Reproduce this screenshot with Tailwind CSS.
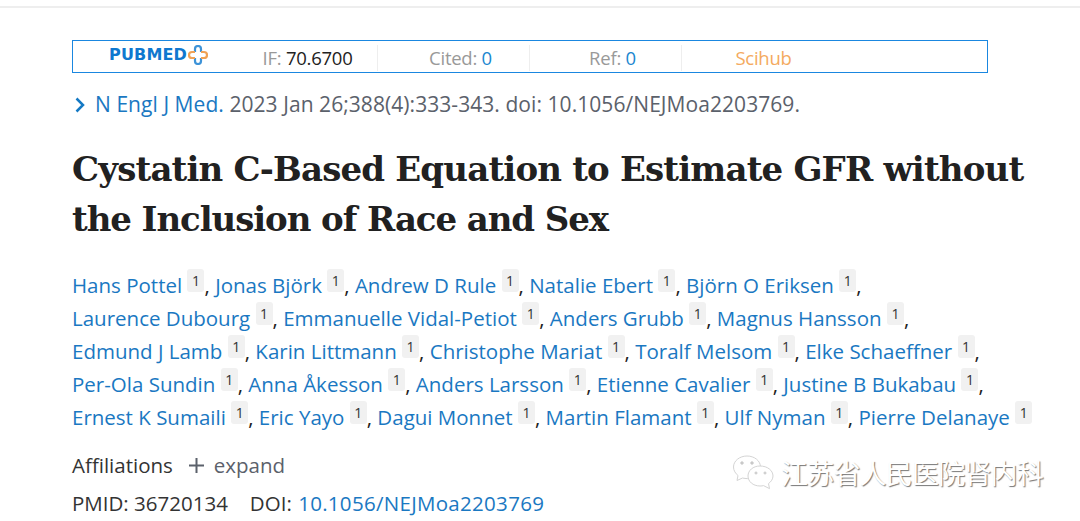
<!DOCTYPE html>
<html lang="en">
<head>
    <meta charset="UTF-8">
    <meta name="viewport" content="width=device-width, initial-scale=1.0">
    <title>Cystatin C-Based Equation to Estimate GFR</title>
    <script src="https://cdn.jsdelivr.net/npm/@tailwindcss/browser@4"></script>
</head>
<body class="bg-white h-[521px] overflow-hidden relative font-['Open_Sans','Noto_Sans',sans-serif]">
    <div class="h-[6px]"></div>
    <div class="h-[2px] bg-[#eeeeee]"></div>

    <div class="ml-[72px] mt-[32px] w-[916px]">
        <!-- toolbar -->
        <div class="h-[33px] border border-[#1a87e0] flex items-center text-[18.500px] tracking-[-0.25px] text-[#999999]">
            <div class="w-[135px] flex items-center justify-end -mt-[3px]">
                <span class="font-['DejaVu_Sans',sans-serif] font-bold text-[16px] tracking-[0.15px] text-[#0f78cf] leading-none">PUBMED</span>
                <svg class="w-[20px] h-[20px] ml-[1px]" viewBox="0 0 20 20" fill="none" stroke-width="2.200">
                    <path d="M7 7V4a3 3 0 0 1 6 0v3M13 13v3a3 3 0 0 1-6 0v-3" stroke="#3d93d8"/>
                    <path d="M7 7H4a3 3 0 0 0 0 6h3M13 7h3a3 3 0 0 1 0 6h-3" stroke="#f0a255"/>
                </svg>
            </div>
            <div class="w-[170px] h-[26px] flex items-center justify-center pl-[30px] border-r border-[#eeeeee] mt-[2px]">IF:&nbsp;<span class="text-[#222222]">70.6700</span></div>
            <div class="w-[152px] h-[26px] flex items-center justify-center pl-[14px] border-r border-[#eeeeee] mt-[2px]">Cited:&nbsp;<span class="text-[#1a87d0]">0</span></div>
            <div class="w-[152px] h-[26px] flex items-center justify-center pl-[14px] border-r border-[#eeeeee] mt-[2px]">Ref:&nbsp;<span class="text-[#1a87d0]">0</span></div>
            <div class="w-[163px] h-[26px] flex items-center justify-center text-[#f4aa60] mt-[2px]">Scihub</div>
        </div>

        <!-- citation -->
        <div class="mt-[17px] flex items-center h-[30px] text-[21px] tracking-[0.06px] text-[#5b616b]">
            <svg class="w-[10px] h-[16px] mr-[10px] ml-[3px]" viewBox="0 0 10 16" fill="none" stroke="#1479c4" stroke-width="2.500"><path d="M1.500 1.500 8 8l-6.500 6.500"/></svg>
            <span class="text-[#1a78c2]">N Engl J Med.</span>&nbsp;2023 Jan 26;388(4):333-343. doi: 10.1056/NEJMoa2203769.
        </div>

        <!-- title -->
        <h1 class="mt-[24px] w-[980px] font-['DejaVu_Serif',serif] font-bold text-[34px] leading-[50px] text-[#212121]"><span class="tracking-[-0.82px]">Cystatin C-Based Equation to Estimate GFR without</span><br><span class="tracking-[-1.08px]">the Inclusion of Race and Sex</span></h1>

        <!-- authors -->
        <div class="mt-[25px] w-[980px] text-[20.500px] leading-[33px] text-[#222222] whitespace-nowrap">
            <div><a class="text-[#1a78c2]">Hans Pottel</a> <sup class="bg-[#f1f1f1] rounded-[3px] text-[#333333] text-[14px] px-[4.500px] py-[2px] top-[-7px] leading-none">1</sup>, <a class="text-[#1a78c2]">Jonas Björk</a> <sup class="bg-[#f1f1f1] rounded-[3px] text-[#333333] text-[14px] px-[4.500px] py-[2px] top-[-7px] leading-none">1</sup>, <a class="text-[#1a78c2]">Andrew D Rule</a> <sup class="bg-[#f1f1f1] rounded-[3px] text-[#333333] text-[14px] px-[4.500px] py-[2px] top-[-7px] leading-none">1</sup>, <a class="text-[#1a78c2]">Natalie Ebert</a> <sup class="bg-[#f1f1f1] rounded-[3px] text-[#333333] text-[14px] px-[4.500px] py-[2px] top-[-7px] leading-none">1</sup>, <a class="text-[#1a78c2]">Björn O Eriksen</a> <sup class="bg-[#f1f1f1] rounded-[3px] text-[#333333] text-[14px] px-[4.500px] py-[2px] top-[-7px] leading-none">1</sup>,</div>
            <div><a class="text-[#1a78c2]">Laurence Dubourg</a> <sup class="bg-[#f1f1f1] rounded-[3px] text-[#333333] text-[14px] px-[4.500px] py-[2px] top-[-7px] leading-none">1</sup>, <a class="text-[#1a78c2]">Emmanuelle Vidal-Petiot</a> <sup class="bg-[#f1f1f1] rounded-[3px] text-[#333333] text-[14px] px-[4.500px] py-[2px] top-[-7px] leading-none">1</sup>, <a class="text-[#1a78c2]">Anders Grubb</a> <sup class="bg-[#f1f1f1] rounded-[3px] text-[#333333] text-[14px] px-[4.500px] py-[2px] top-[-7px] leading-none">1</sup>, <a class="text-[#1a78c2]">Magnus Hansson</a> <sup class="bg-[#f1f1f1] rounded-[3px] text-[#333333] text-[14px] px-[4.500px] py-[2px] top-[-7px] leading-none">1</sup>,</div>
            <div><a class="text-[#1a78c2]">Edmund J Lamb</a> <sup class="bg-[#f1f1f1] rounded-[3px] text-[#333333] text-[14px] px-[4.500px] py-[2px] top-[-7px] leading-none">1</sup>, <a class="text-[#1a78c2]">Karin Littmann</a> <sup class="bg-[#f1f1f1] rounded-[3px] text-[#333333] text-[14px] px-[4.500px] py-[2px] top-[-7px] leading-none">1</sup>, <a class="text-[#1a78c2]">Christophe Mariat</a> <sup class="bg-[#f1f1f1] rounded-[3px] text-[#333333] text-[14px] px-[4.500px] py-[2px] top-[-7px] leading-none">1</sup>, <a class="text-[#1a78c2]">Toralf Melsom</a> <sup class="bg-[#f1f1f1] rounded-[3px] text-[#333333] text-[14px] px-[4.500px] py-[2px] top-[-7px] leading-none">1</sup>, <a class="text-[#1a78c2]">Elke Schaeffner</a> <sup class="bg-[#f1f1f1] rounded-[3px] text-[#333333] text-[14px] px-[4.500px] py-[2px] top-[-7px] leading-none">1</sup>,</div>
            <div><a class="text-[#1a78c2]">Per-Ola Sundin</a> <sup class="bg-[#f1f1f1] rounded-[3px] text-[#333333] text-[14px] px-[4.500px] py-[2px] top-[-7px] leading-none">1</sup>, <a class="text-[#1a78c2]">Anna Åkesson</a> <sup class="bg-[#f1f1f1] rounded-[3px] text-[#333333] text-[14px] px-[4.500px] py-[2px] top-[-7px] leading-none">1</sup>, <a class="text-[#1a78c2]">Anders Larsson</a> <sup class="bg-[#f1f1f1] rounded-[3px] text-[#333333] text-[14px] px-[4.500px] py-[2px] top-[-7px] leading-none">1</sup>, <a class="text-[#1a78c2]">Etienne Cavalier</a> <sup class="bg-[#f1f1f1] rounded-[3px] text-[#333333] text-[14px] px-[4.500px] py-[2px] top-[-7px] leading-none">1</sup>, <a class="text-[#1a78c2]">Justine B Bukabau</a> <sup class="bg-[#f1f1f1] rounded-[3px] text-[#333333] text-[14px] px-[4.500px] py-[2px] top-[-7px] leading-none">1</sup>,</div>
            <div><a class="text-[#1a78c2]">Ernest K Sumaili</a> <sup class="bg-[#f1f1f1] rounded-[3px] text-[#333333] text-[14px] px-[4.500px] py-[2px] top-[-7px] leading-none">1</sup>, <a class="text-[#1a78c2]">Eric Yayo</a> <sup class="bg-[#f1f1f1] rounded-[3px] text-[#333333] text-[14px] px-[4.500px] py-[2px] top-[-7px] leading-none">1</sup>, <a class="text-[#1a78c2]">Dagui Monnet</a> <sup class="bg-[#f1f1f1] rounded-[3px] text-[#333333] text-[14px] px-[4.500px] py-[2px] top-[-7px] leading-none">1</sup>, <a class="text-[#1a78c2]">Martin Flamant</a> <sup class="bg-[#f1f1f1] rounded-[3px] text-[#333333] text-[14px] px-[4.500px] py-[2px] top-[-7px] leading-none">1</sup>, <a class="text-[#1a78c2]">Ulf Nyman</a> <sup class="bg-[#f1f1f1] rounded-[3px] text-[#333333] text-[14px] px-[4.500px] py-[2px] top-[-7px] leading-none">1</sup>, <a class="text-[#1a78c2]">Pierre Delanaye</a> <sup class="bg-[#f1f1f1] rounded-[3px] text-[#333333] text-[14px] px-[4.500px] py-[2px] top-[-7px] leading-none">1</sup></div>
        </div>

        <!-- affiliations -->
        <div class="mt-[15px] flex items-center h-[33px] text-[20.500px] text-[#333333]">
            Affiliations
            <svg class="w-[15px] h-[15px] ml-[16px] mr-[10px]" viewBox="0 0 15 15" stroke="#5b616b" stroke-width="2"><path d="M7.500 0v15M0 7.500h15"/></svg>
            <span class="text-[#5b616b]">expand</span>
        </div>
        <div class="mt-[3px] flex items-center h-[37px] text-[20.500px] text-[#333333]">
            PMID: 36720134<span class="ml-[22px]">DOI:</span>&nbsp;<span class="ml-[1px] tracking-[0.3px] text-[#1a78c2]">10.1056/NEJMoa2203769</span>
        </div>
    </div>

    <!-- watermark -->
    <div class="absolute left-[732px] top-[452px] flex items-center gap-[5px]">
        <svg class="w-[44px] h-[40px]" viewBox="0 0 44 40" fill="#ffffff" stroke="#d4d4d4" stroke-width="1">
            <path d="M15 4C7.500 4 1.500 9 1.500 15c0 3.500 2 6.500 4.500 8.500l-1 5 5.500-2.500c1.500.4 3.500.6 5 .6 7.500 0 13-5.500 13-11.600S22.500 4 15 4z"/>
            <path d="M28 14c-7 0-12 4.500-12 10s5 10 12 10c1.500 0 2.500-.1 3.500-.4l6 3-1-5c2.500-1.800 4.500-4.600 4.500-7.600 0-5.500-5.500-10-13-10z"/>
            <circle cx="10" cy="11" r="1.300" fill="#bbbbbb"/><circle cx="20" cy="11" r="1.300" fill="#bbbbbb"/>
            <circle cx="24" cy="21" r="1.100" fill="#bbbbbb"/><circle cx="33" cy="21" r="1.100" fill="#bbbbbb"/>
        </svg>
        <span class="font-['Noto_Sans_CJK_SC',sans-serif] text-[27px] leading-none tracking-[-0.8px] text-white [text-shadow:1px_1px_1px_#777777]">江苏省人民医院肾内科</span>
    </div>
</body>
</html>
